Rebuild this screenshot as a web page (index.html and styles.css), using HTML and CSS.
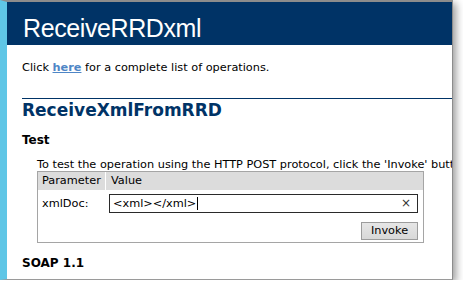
FILE: index.html
```html
<!DOCTYPE html>
<html>
<head>
    <title>ReceiveRRDxml Web Service</title>
    <meta charset="UTF-8">
    <link rel="stylesheet" href="styles.css">
</head>
<body>
    <div class="window">
        <h1 class="heading1">ReceiveRRDxml</h1>

        <div class="content">
            <p class="intro">Click <a href="#">here</a> for a complete list of operations.</p>

            <h2>ReceiveXmlFromRRD</h2>

            <h3>Test</h3>
            <div class="test-box">
                <p class="test-intro">To test the operation using the HTTP POST protocol, click the 'Invoke' button.</p>
                <form onsubmit="return false">
                    <table class="param-table">
                        <tr>
                            <th class="col-name">Parameter</th>
                            <th>Value</th>
                        </tr>
                        <tr>
                            <td class="param-name">xmlDoc:</td>
                            <td class="param-value">
                                <div class="text-field">
                                    <span class="field-text">&lt;xml&gt;&lt;/xml&gt;</span><span class="caret"></span>
                                    <span class="clear">×</span>
                                </div>
                                <div class="actions">
                                    <button type="submit" class="invoke">Invoke</button>
                                </div>
                            </td>
                        </tr>
                    </table>
                </form>
            </div>

            <h3>SOAP 1.1</h3>
        </div>
    </div>
</body>
</html>
```

FILE: styles.css
```css
* {
    margin: 0;
    padding: 0;
    box-sizing: border-box;
}

body {
    font-family: 'DejaVu Sans', Verdana, sans-serif;
    font-size: 11.3px;
    color: #000;
    background: white;
}

.window {
    width: 453px;
    height: 280px;
    border-top: 2px solid #8c8c8c;
    border-right: 1px solid #8c8c8c;
    border-bottom: 1px solid #9a9a9a;
    border-left: 7px solid #5fc6e6;
    background: white;
    overflow: hidden;
    box-shadow: 3px 3px 8px rgba(0, 0, 0, 0.4);
}

.heading1 {
    background: #003366;
    color: white;
    font-family: 'Liberation Sans', Tahoma, sans-serif;
    font-size: 25px;
    font-weight: normal;
    letter-spacing: -0.4px;
    line-height: 28px;
    padding: 12px 0 3px 16px;
}

.content {
    padding-left: 15px;
}

.intro {
    margin-top: 16px;
    line-height: 13px;
}

.intro a {
    color: #4f86c6;
    font-weight: bold;
    text-decoration: underline;
}

h2 {
    margin-top: 24px;
    padding-top: 1px;
    border-top: 1px solid #003366;
    color: #003366;
    font-size: 17px;
    font-weight: bold;
    line-height: 20px;
}

h3 {
    margin-top: 13px;
    font-size: 12px;
    font-weight: bold;
    line-height: 14px;
}

.test-box {
    margin-left: 15px;
}

.test-intro {
    margin-top: 11px;
    line-height: 13px;
    white-space: nowrap;
}

.param-table {
    width: 387px;
    table-layout: fixed;
    border-collapse: separate;
    border-spacing: 0;
    border: 1px solid #a5a5a5;
}

.param-table th {
    background: #dcdcdc;
    font-weight: normal;
    text-align: left;
    height: 18px;
    line-height: 18px;
    padding: 0 0 0 5px;
}

.param-table th.col-name {
    width: 68px;
    padding-left: 4px;
    border-right: 1px solid white;
}

.param-name {
    vertical-align: top;
    padding: 6px 0 0 4px;
    line-height: 15px;
}

.param-value {
    vertical-align: top;
    padding: 4px 5px 2px 3px;
}

.text-field {
    display: flex;
    align-items: center;
    height: 19px;
    border: 1px solid #2a2a2a;
    padding: 0 6px 0 3px;
    line-height: 15px;
}

.caret {
    width: 1px;
    height: 13px;
    margin-left: 1px;
    background: #000;
}

.clear {
    margin-left: auto;
    font-size: 12px;
    color: #333;
}

.actions {
    margin-top: 9px;
    text-align: right;
}

.invoke {
    width: 57px;
    height: 18px;
    background: linear-gradient(#e6e6e6, #d8d8d8);
    border: 1px solid #9c9c9c;
    font-family: inherit;
    font-size: 11.3px;
    line-height: 16px;
    color: #000;
    cursor: pointer;
}
```
